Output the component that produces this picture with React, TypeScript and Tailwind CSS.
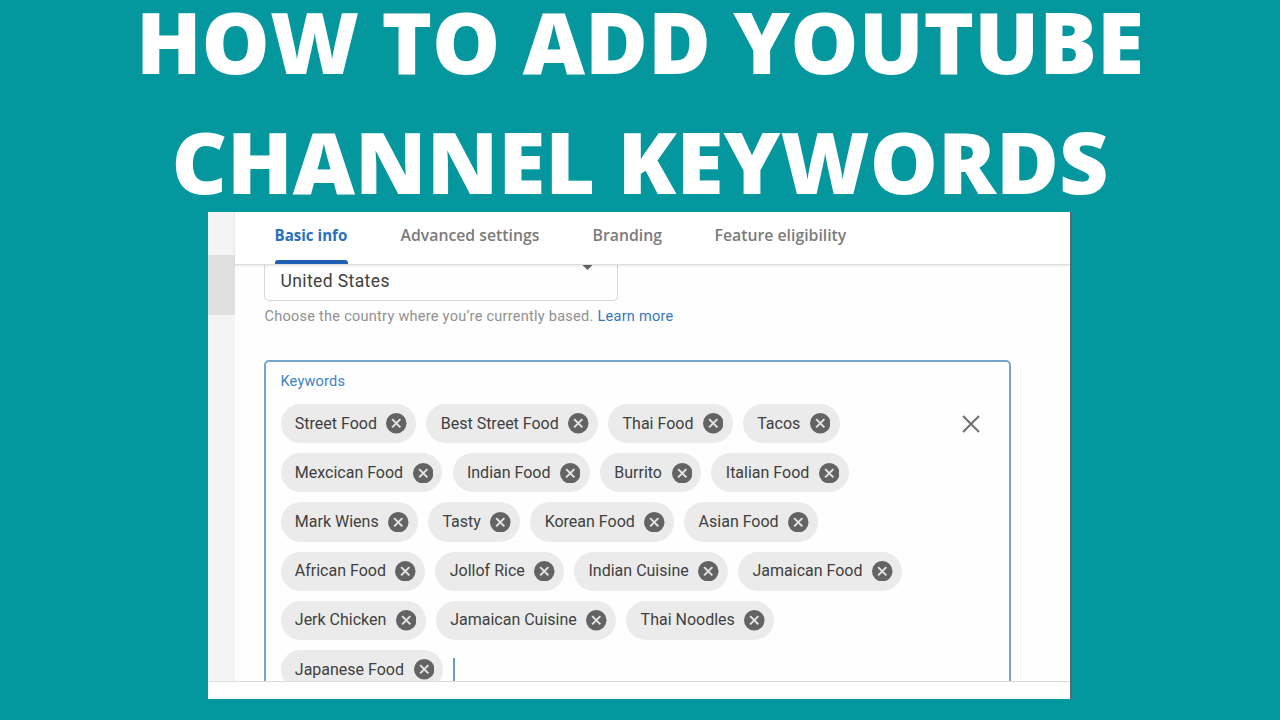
import React from 'react';

const tabs = [
  { label: 'Basic info', width: 'w-[73px]', active: true },
  { label: 'Advanced settings', width: 'w-[139px]' },
  { label: 'Branding', width: 'w-[69px]' },
  { label: 'Feature eligibility', width: 'w-[134px]' },
];

const keywords = [
  'Street Food',
  'Best Street Food',
  'Thai Food',
  'Tacos',
  'Mexcican Food',
  'Indian Food',
  'Burrito',
  'Italian Food',
  'Mark Wiens',
  'Tasty',
  'Korean Food',
  'Asian Food',
  'African Food',
  'Jollof Rice',
  'Indian Cuisine',
  'Jamaican Food',
  'Jerk Chicken',
  'Jamaican Cuisine',
  'Thai Noodles',
  'Japanese Food',
];

const RemoveIcon: React.FC = () => (
  <svg viewBox="2 2 20 20" className="w-[20.5px] h-[20.5px] shrink-0">
    <circle cx="12" cy="12" r="10" fill="#636363" />
    <path d="M8 8l8 8M16 8l-8 8" stroke="#e4e4e4" strokeWidth="2" />
  </svg>
);

const Chip: React.FC<{ label: string }> = ({ label }) => (
  <div className="flex items-center h-[39.2px] pl-[14.3px] pr-[9.3px] gap-[9.5px] rounded-full bg-[#ebebeb] text-[#404040]">
    <span className="text-[16px] leading-5 whitespace-nowrap">{label}</span>
    <RemoveIcon />
  </div>
);

const Tabs: React.FC = () => (
  <nav className="relative z-10 flex h-[53px] shrink-0 gap-[53px] pl-[39.5px] bg-white border-b border-[#dedede] shadow-[0_1px_3px_rgba(0,0,0,0.10)] font-['Open_Sans',sans-serif]">
    {tabs.map((tab) => (
      <div
        key={tab.label}
        className={`flex flex-col justify-between h-full ${tab.width} ${tab.active ? 'text-[#2a70c0] font-bold' : 'text-[#7b7b7b] font-semibold'}`}
      >
        <span className={`pt-[13px] leading-5 whitespace-nowrap ${tab.active ? 'text-[15.1px]' : 'text-[15.8px]'}`}>
          {tab.label}
        </span>
        {tab.active && <div className="h-[4px] rounded-t-[3px] bg-[#1f5fb5]" />}
      </div>
    ))}
  </nav>
);

const KeywordsField: React.FC = () => (
  <div className="mt-[33px] w-[747px] h-[360px] shrink-0 rounded-[5px] border-2 border-[#76a5cb] pl-[14.5px] pt-[10px]">
    <div className="text-[14.5px] leading-5 tracking-[0.2px] text-[#3e80c6]">Keywords</div>
    <div className="flex justify-between pt-[12px] pr-[29px]">
      <div className="flex flex-wrap items-center w-[640px] gap-x-[10.2px] gap-y-[10px]">
        {keywords.map((keyword) => (
          <Chip key={keyword} label={keyword} />
        ))}
        <div className="w-[2px] h-[24px] bg-[#6a9cc6]" />
      </div>
      <svg viewBox="0 0 18 18" className="w-[18px] h-[18px] mt-[11px]">
        <path d="M1 1l16 16M17 1L1 17" stroke="#6f6f6f" strokeWidth="2" />
      </svg>
    </div>
  </div>
);

const App: React.FC = () => {
  return (
    <div className="flex flex-col items-center w-[1280px] h-[720px] overflow-hidden bg-[#04989e] font-[Roboto,sans-serif]">
      <h1 className="-mt-[19px] h-[231px] shrink-0 text-center text-[85.8px] leading-[120px] font-extrabold text-white whitespace-nowrap font-['Open_Sans',sans-serif]">
        HOW TO ADD YOUTUBE
        <br />
        CHANNEL KEYWORDS
      </h1>

      <div className="flex flex-col w-[864px] h-[487px] shrink-0 bg-[#fefefe] border-r-2 border-[#59696a]">
        <div className="flex h-[469px] shrink-0 overflow-hidden">
          <aside className="w-[27px] shrink-0 bg-[#f4f4f4] pt-[43px]">
            <div className="h-[60px] bg-[#e0e0e0]" />
          </aside>

          <main className="flex flex-col flex-1 min-w-0">
            <Tabs />
            <div className="flex flex-col flex-1 min-h-0 overflow-hidden pl-[29px]">
              <div className="flex justify-between w-[354px] h-[36px] shrink-0 rounded-b-[5px] border border-t-0 border-[#d6d6d6] pl-[15.5px] pr-[24px]">
                <span className="pt-[6px] text-[17.5px] leading-5 tracking-[0.4px] text-[#404040]">United States</span>
                <svg viewBox="0 0 12 6" className="w-[11px] h-[5px]">
                  <path d="M0 0h12L6 6z" fill="#666666" />
                </svg>
              </div>
              <p className="pt-[6px] pl-[0.5px] text-[14.5px] leading-5 tracking-[0.265px] text-[#909090] whitespace-nowrap">
                Choose the country where you’re currently based.{' '}
                <span className="text-[#3478bc]">Learn more</span>
              </p>
              <KeywordsField />
            </div>
          </main>
        </div>
        <footer className="flex-1 border-t border-[#dcdcdc] bg-white" />
      </div>
    </div>
  );
};

export default App;
